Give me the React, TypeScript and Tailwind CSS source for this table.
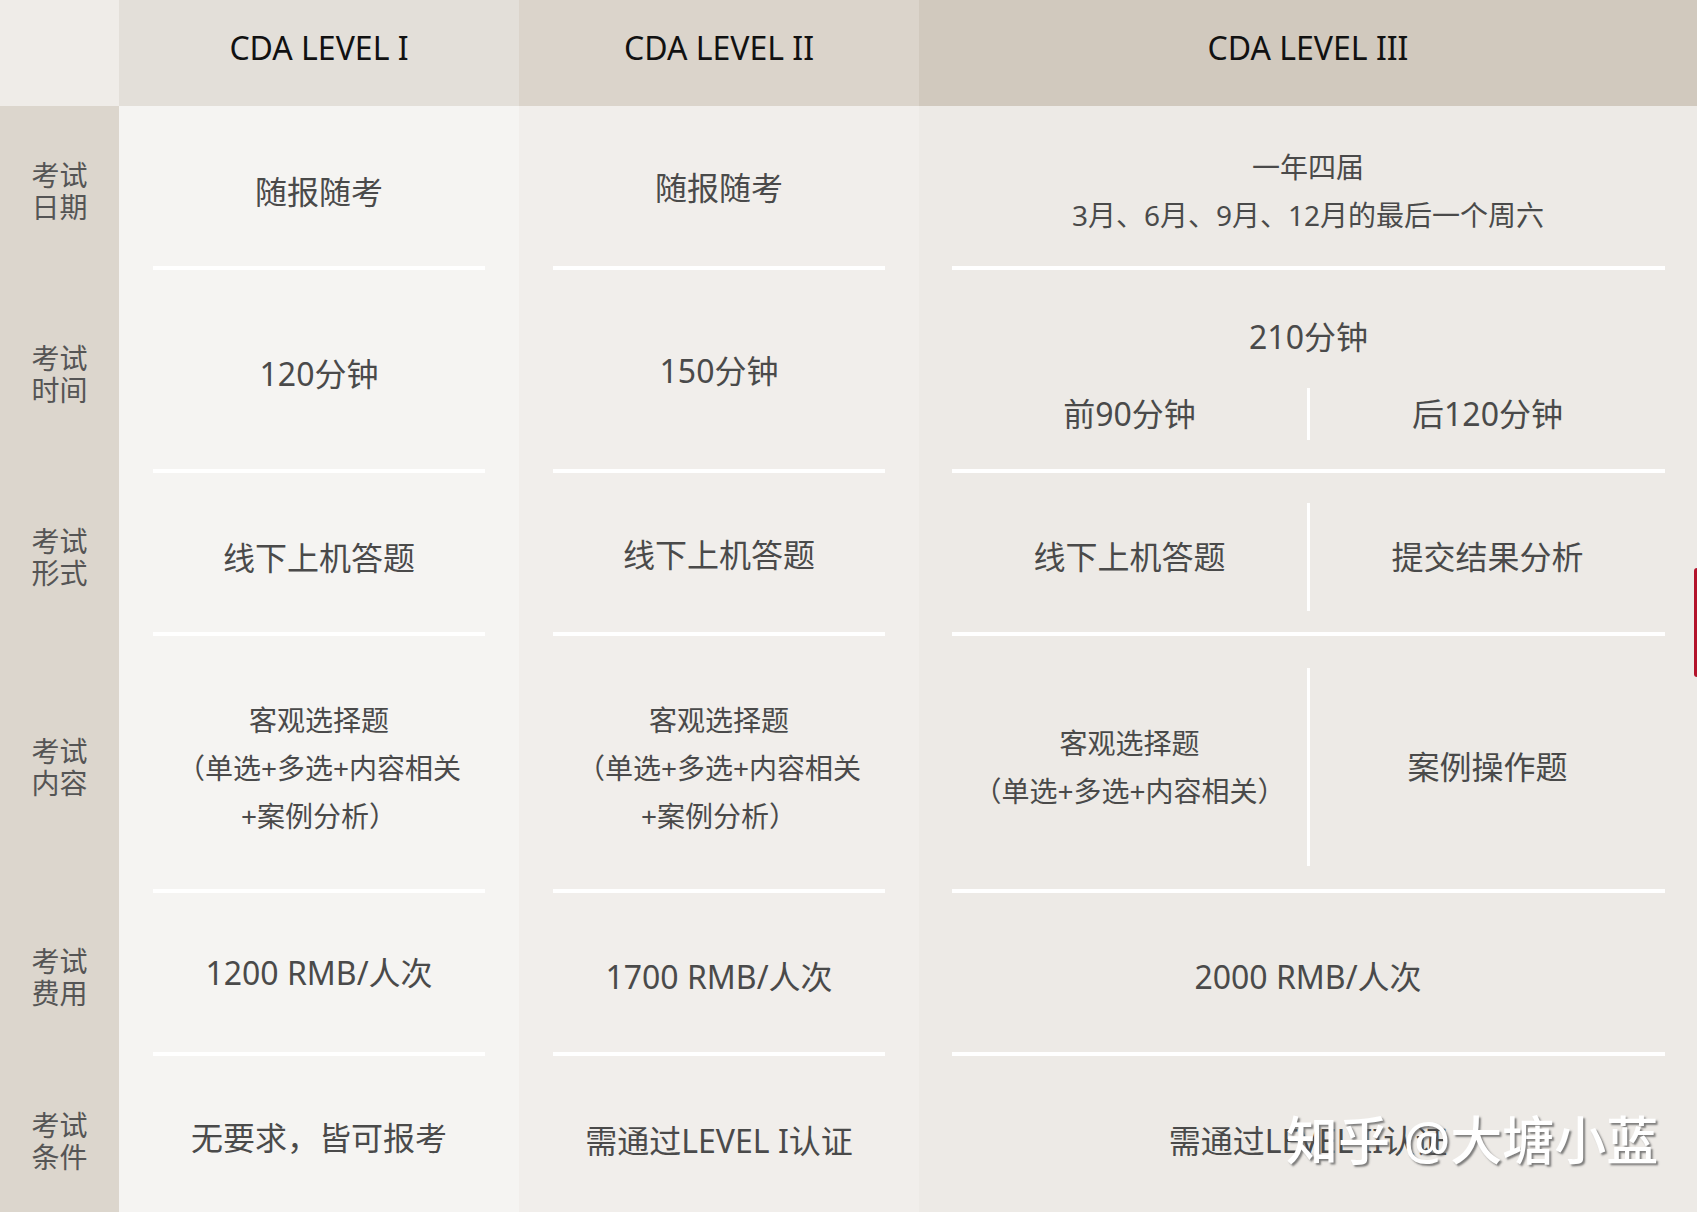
import React from "react";

const txt = "text-[32px] leading-[40px] text-[#4a4a4a]";
const small = "text-[28px] leading-[48px] text-[#4a4a4a]";

function Cell({
  bg,
  last,
  inset,
  children,
}: {
  bg: string;
  last?: boolean;
  inset: string;
  children: React.ReactNode;
}) {
  return (
    <div className={`${bg} flex flex-col`}>
      <div className="flex-1 flex items-center justify-center text-center">{children}</div>
      {!last && <div className={`${inset} h-[4px] bg-white`} />}
    </div>
  );
}

function Label({ a, b, last }: { a: string; b: string; last?: boolean }) {
  return (
    <div className={`bg-[#dcd6cd] flex items-center justify-center ${last ? "pt-[14px]" : "pt-[5px]"}`}>
      <div className="text-[28px] leading-[32px] text-[#555] text-center">
        <div>{a}</div>
        <div>{b}</div>
      </div>
    </div>
  );
}

const c1 = "bg-[#f5f4f2]";
const c2 = "bg-[#f1eeeb]";
const c3 = "bg-[#edeae6]";
const in12 = "mx-[34px]";
const in3 = "ml-[33px] mr-[32px]";

export default function App() {
  return (
    <div className="relative w-[1697px] h-[1212px] overflow-hidden font-['Noto_Sans','Noto_Sans_CJK_SC',sans-serif] bg-[#edeae6]">
      <div className="grid grid-cols-[119px_400px_400px_778px] grid-rows-[106px_164px_203px_163px_257px_163px_156px] w-full h-full">
        {/* header */}
        <div className="bg-[#efece8]" />
        <div className="bg-[#e3dfd9] flex items-center justify-center pb-[10px] text-[32px] text-[#111]">CDA LEVEL I</div>
        <div className="bg-[#dbd4cb] flex items-center justify-center pb-[10px] text-[32px] text-[#111]">CDA LEVEL II</div>
        <div className="bg-[#d1c9be] flex items-center justify-center pb-[10px] text-[32px] text-[#111]">CDA LEVEL III</div>

        {/* row 1 */}
        <Label a="考试" b="日期" />
        <Cell bg={c1} inset={in12}>
          <div className={`${txt} pt-[12px]`}>随报随考</div>
        </Cell>
        <Cell bg={c2} inset={in12}>
          <div className={`${txt} pt-[4px]`}>随报随考</div>
        </Cell>
        <Cell bg={c3} inset={in3}>
          <div className={`${small} pt-[10px]`}>
            <div>一年四届</div>
            <div>3月、6月、9月、12月的最后一个周六</div>
          </div>
        </Cell>

        {/* row 2 */}
        <Label a="考试" b="时间" />
        <Cell bg={c1} inset={in12}>
          <div className={`${txt} pt-[8px]`}>120分钟</div>
        </Cell>
        <Cell bg={c2} inset={in12}>
          <div className={`${txt} pt-[2px]`}>150分钟</div>
        </Cell>
        <div className={`${c3} flex flex-col`}>
          <div className="flex-1 flex flex-col justify-center pt-[18px] ml-[33px] mr-[32px]">
            <div className={`${txt} text-center`}>210分钟</div>
            <div className="mt-[31px] flex h-[52px] items-center">
              <div className={`${txt} flex-1 text-center`}>前90分钟</div>
              <div className="w-[3px] h-full bg-white" />
              <div className={`${txt} flex-1 text-center`}>后120分钟</div>
            </div>
          </div>
          <div className={`${in3} h-[4px] bg-white`} />
        </div>

        {/* row 3 */}
        <Label a="考试" b="形式" />
        <Cell bg={c1} inset={in12}>
          <div className={`${txt} pt-[10px]`}>线下上机答题</div>
        </Cell>
        <Cell bg={c2} inset={in12}>
          <div className={`${txt} pt-[4px]`}>线下上机答题</div>
        </Cell>
        <div className={`${c3} flex flex-col`}>
          <div className="flex-1 flex items-center pt-[8px] ml-[33px] mr-[32px]">
            <div className="flex h-[108px] w-full items-center">
              <div className={`${txt} flex-1 text-center`}>线下上机答题</div>
              <div className="w-[3px] h-full bg-white" />
              <div className={`${txt} flex-1 text-center`}>提交结果分析</div>
            </div>
          </div>
          <div className={`${in3} h-[4px] bg-white`} />
        </div>

        {/* row 4 */}
        <Label a="考试" b="内容" />
        <Cell bg={c1} inset={in12}>
          <div className={`${small} pt-[10px]`}>
            <div>客观选择题</div>
            <div>（单选+多选+内容相关</div>
            <div>+案例分析）</div>
          </div>
        </Cell>
        <Cell bg={c2} inset={in12}>
          <div className={`${small} pt-[10px]`}>
            <div>客观选择题</div>
            <div>（单选+多选+内容相关</div>
            <div>+案例分析）</div>
          </div>
        </Cell>
        <div className={`${c3} flex flex-col`}>
          <div className="flex-1 flex items-center pt-[9px] ml-[33px] mr-[32px]">
            <div className="flex h-[198px] w-full items-center">
              <div className={`${small} flex-1 text-center`}>
                <div>客观选择题</div>
                <div>（单选+多选+内容相关）</div>
              </div>
              <div className="w-[3px] h-full bg-white" />
              <div className={`${txt} flex-1 text-center`}>案例操作题</div>
            </div>
          </div>
          <div className={`${in3} h-[4px] bg-white`} />
        </div>

        {/* row 5 */}
        <Label a="考试" b="费用" />
        <Cell bg={c1} inset={in12}>
          <div className={`${txt}`}>1200 RMB/人次</div>
        </Cell>
        <Cell bg={c2} inset={in12}>
          <div className={`${txt} pt-[8px]`}>1700 RMB/人次</div>
        </Cell>
        <Cell bg={c3} inset={in3}>
          <div className={`${txt} pt-[8px]`}>2000 RMB/人次</div>
        </Cell>

        {/* row 6 */}
        <Label a="考试" b="条件" last />
        <Cell bg={c1} inset={in12} last>
          <div className={`${txt} pt-[8px]`}>无要求，皆可报考</div>
        </Cell>
        <Cell bg={c2} inset={in12} last>
          <div className={`${txt} pt-[14px]`}>需通过LEVEL I认证</div>
        </Cell>
        <Cell bg={c3} inset={in3} last>
          <div className={`${txt} pt-[14px]`}>需通过LEVEL II认证</div>
        </Cell>
      </div>

      {/* watermark */}
      <div className="absolute left-[1286px] top-[1108px] text-[52px] leading-[64px] font-medium text-white whitespace-nowrap [text-shadow:2px_2px_2px_rgba(90,90,90,0.75)]">
        知乎 @大塘小蓝
      </div>

      {/* edge widget */}
      <div className="absolute right-0 top-[568px] w-[3px] h-[109px] bg-[#b3132b] rounded-l-[3px]" />
    </div>
  );
}
